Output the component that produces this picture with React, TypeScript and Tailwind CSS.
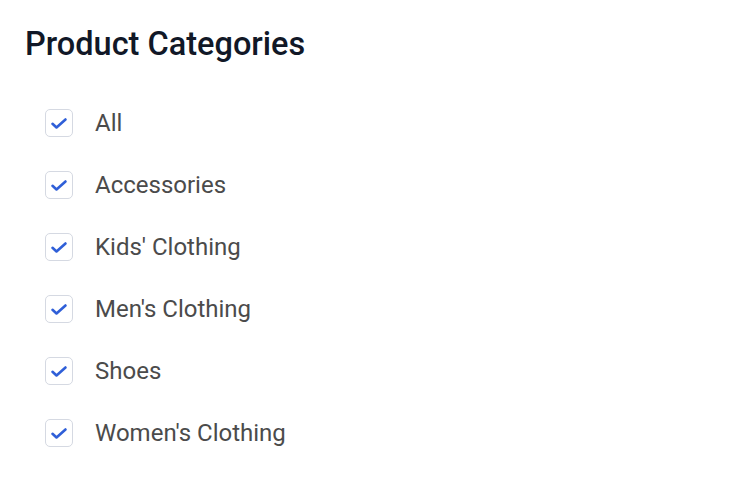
const categories = ['All', 'Accessories', "Kids' Clothing", "Men's Clothing", 'Shoes', "Women's Clothing"]

function CheckBox() {
  return (
    <span className="flex h-[28px] w-[28px] shrink-0 items-center justify-center rounded-[5px] border border-[#d5d9e2] bg-white">
      <svg width="18" height="13" viewBox="0 0 18 13" fill="none">
        <path d="M2.5 6.8l4 3.7L15.5 2.5" stroke="#2f5fd8" strokeWidth="2.6" strokeLinecap="round" strokeLinejoin="round" />
      </svg>
    </span>
  )
}

export default function App() {
  return (
    <div className="h-[490px] w-[742px] bg-white pl-[25px] pt-[24px] font-['Roboto',sans-serif]">
      <h1 className="text-[32.5px] font-medium leading-[40px] text-[#111827]">Product Categories</h1>
      <ul className="mt-[45px] flex flex-col gap-[34px] pl-[20px]">
        {categories.map((c) => (
          <li key={c} className="flex h-[28px] items-center gap-[22px]">
            <CheckBox />
            <span className="text-[24px] text-[#4b4b4b]">{c}</span>
          </li>
        ))}
      </ul>
    </div>
  )
}
